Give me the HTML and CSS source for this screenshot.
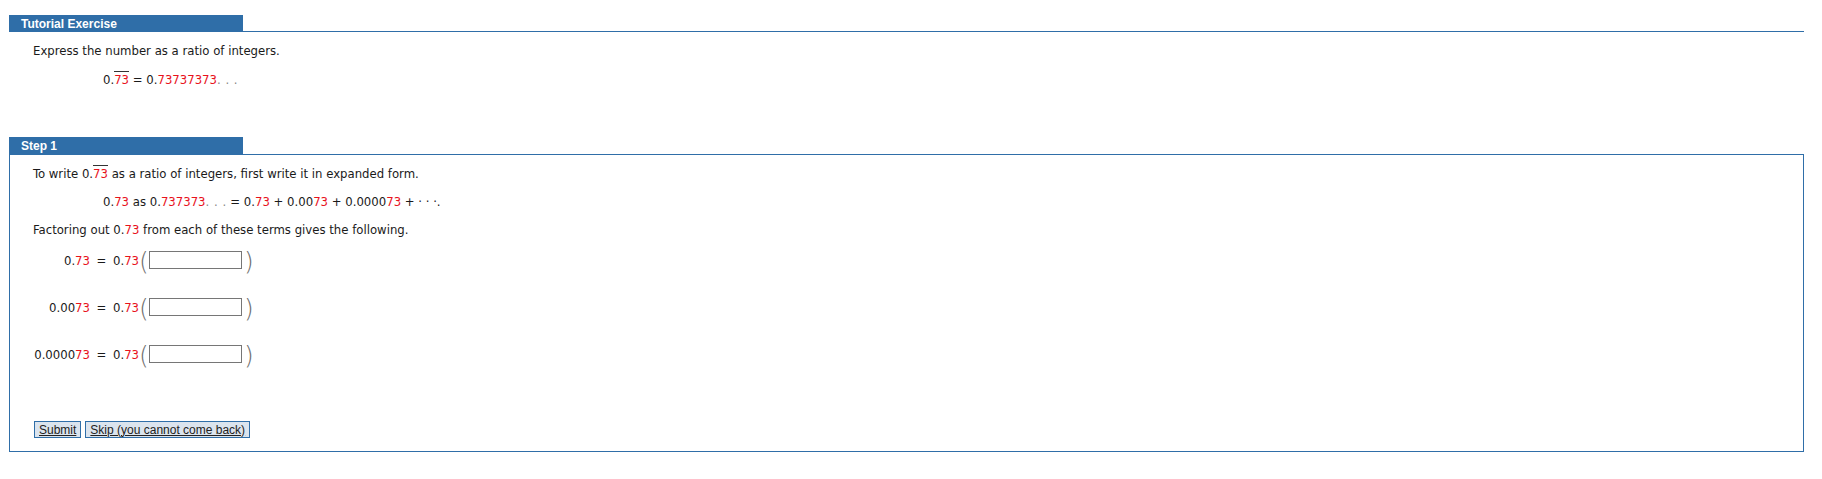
FILE: index.html
```html
<!DOCTYPE html>
<html lang="en">
<head>
  <meta charset="UTF-8">
  <title>Tutorial Exercise</title>
  <link rel="stylesheet" href="styles.css">
</head>
<body>

  <!-- Question -->
  <div class="section">
    <div class="section-head"><span class="tab">Tutorial Exercise</span></div>
    <div class="section-body">
      <p class="line">Express the number as a ratio of integers.</p>
      <p class="line math">0.<span class="rep red">73</span> = 0.<span class="red">73737373</span><span class="dots">. . .</span></p>
    </div>
  </div>

  <!-- Step 1 -->
  <div class="section step">
    <div class="section-head"><span class="tab">Step 1</span></div>
    <div class="step-box">
      <p class="line">To write 0.<span class="rep red">73</span> as a ratio of integers, first write it in expanded form.</p>
      <p class="line math">0.<span class="red">73</span> as 0.<span class="red">737373</span><span class="dots">. . .</span> = 0.<span class="red">73</span> + 0.00<span class="red">73</span> + 0.0000<span class="red">73</span> + &middot; &middot; &middot;.</p>
      <p class="line">Factoring out 0.<span class="red">73</span> from each of these terms gives the following.</p>

      <div class="rows">
        <div class="row">
          <span class="lhs">0.<span class="red">73</span></span>
          <span class="eq">=</span>
          <span class="factor">0.<span class="red">73</span></span>
          <span class="paren">(</span>
          <input class="answer" type="text">
          <span class="paren">)</span>
        </div>
        <div class="row">
          <span class="lhs">0.00<span class="red">73</span></span>
          <span class="eq">=</span>
          <span class="factor">0.<span class="red">73</span></span>
          <span class="paren">(</span>
          <input class="answer" type="text">
          <span class="paren">)</span>
        </div>
        <div class="row">
          <span class="lhs">0.0000<span class="red">73</span></span>
          <span class="eq">=</span>
          <span class="factor">0.<span class="red">73</span></span>
          <span class="paren">(</span>
          <input class="answer" type="text">
          <span class="paren">)</span>
        </div>
      </div>

      <div class="buttons">
        <button class="btn">Submit</button>
        <button class="btn">Skip (you cannot come back)</button>
      </div>
    </div>
  </div>

</body>
</html>
```

FILE: styles.css
```css
* {
  box-sizing: border-box;
}

body {
  margin: 0;
  padding: 15px 18px 0 9px;
  background: white;
  color: #1a1a1a;
  font-family: "DejaVu Sans Condensed", "DejaVu Sans", sans-serif;
  font-size: 13px;
}

.section-head {
  height: 17px;
  border-bottom: 1px solid #2f6ea8;
}

.tab {
  display: block;
  width: 234px;
  height: 17px;
  padding: 2px 0 0 12px;
  background: #2f6ea8;
  color: white;
  font-family: "Liberation Sans", Arial, sans-serif;
  font-weight: bold;
  font-size: 12px;
}

.line {
  margin: 0;
  height: 16px;
  line-height: 16px;
  white-space: nowrap;
}

.section-body {
  padding: 11px 24px 0;
}

.section-body .line + .line {
  margin-top: 13px;
}

.math {
  padding-left: 70px;
}

.red {
  color: #e8121c;
}

.rep {
  border-top: 1px solid #333;
}

.dots {
  color: #888;
  letter-spacing: 0.5px;
}

.step {
  margin-top: 49px;
}

.step .section-head {
  border-bottom: none;
}

.step-box {
  border: 1px solid #2f6ea8;
  padding: 11px 23px 13px;
}

.step-box .line + .line {
  margin-top: 12px;
}

.rows {
  margin-top: 11px;
}

.row {
  display: flex;
  align-items: center;
  height: 22px;
}

.row + .row {
  margin-top: 25px;
}

.lhs {
  width: 57px;
  text-align: right;
}

.eq {
  width: 23px;
  text-align: center;
}

.paren {
  color: #6e6e6e;
  font-family: "DejaVu Sans", sans-serif;
  font-weight: 200;
  font-size: 25px;
  line-height: 22px;
  margin-top: 3px;
  width: 9px;
  text-align: center;
}

.answer {
  width: 93px;
  height: 18px;
  margin: 0 2px 0 1px;
  border: 1px solid #767676;
  padding: 0 3px;
}

.buttons {
  margin-top: 56px;
  margin-left: 1px;
  display: flex;
  gap: 4px;
}

.btn {
  height: 17px;
  padding: 0 4px;
  background: #dbe4ee;
  border: 1px solid #2f6ea8;
  color: #222;
  font-family: "Liberation Sans", Arial, sans-serif;
  font-size: 12px;
  text-decoration: underline;
  cursor: pointer;
}
```
